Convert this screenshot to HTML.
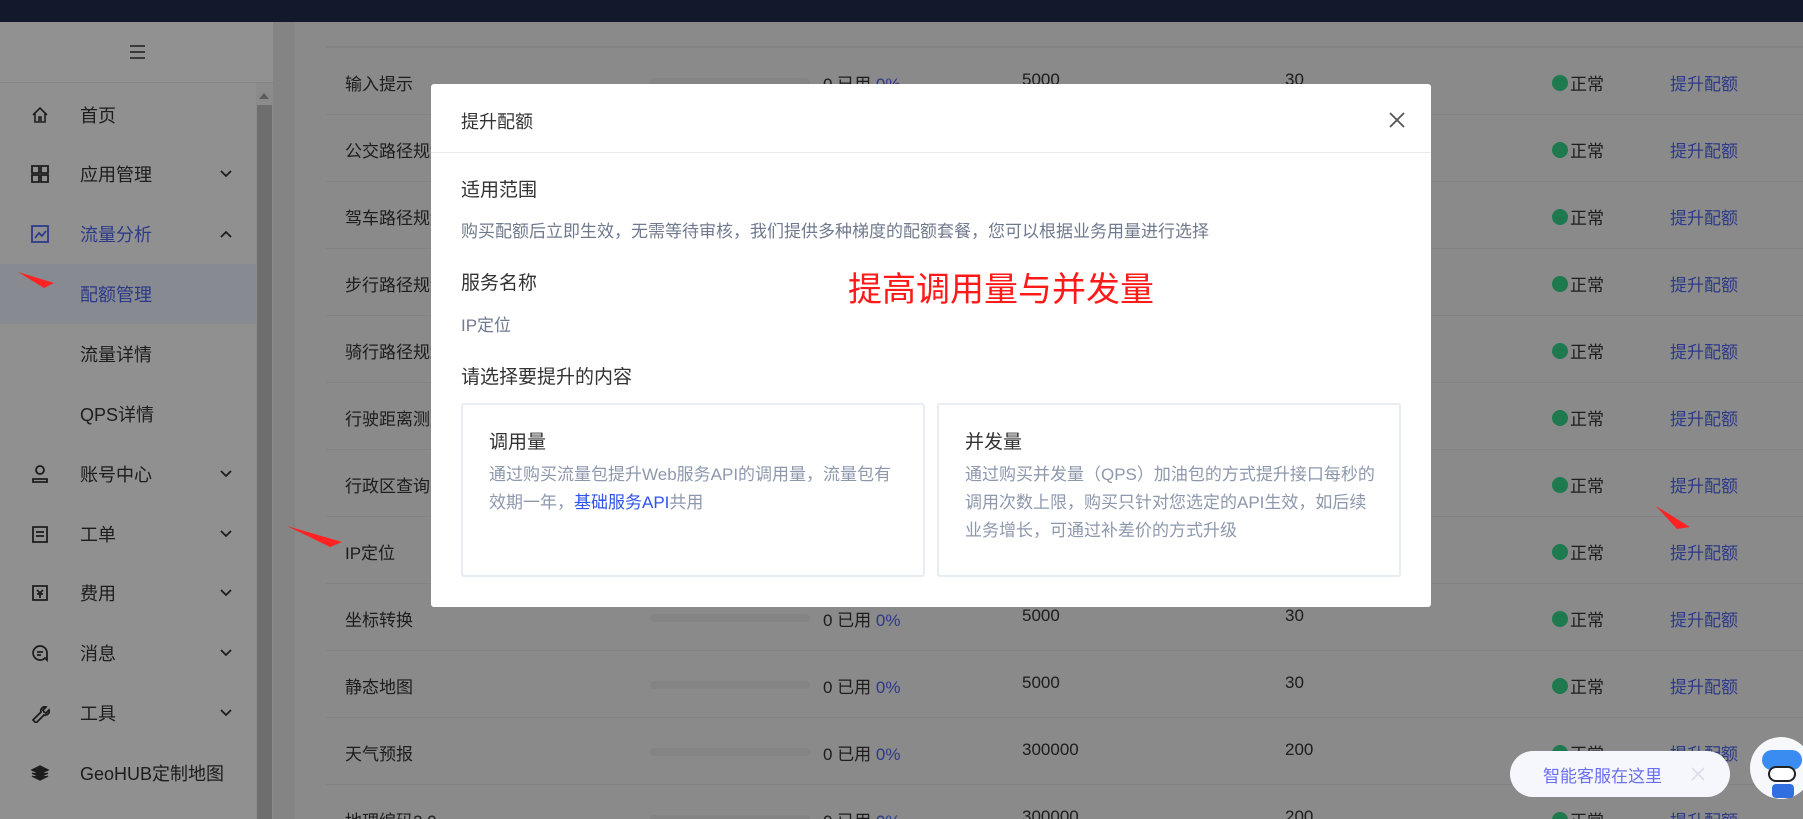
<!DOCTYPE html>
<html style="width:1803px;height:819px;overflow:hidden"><head><meta charset="utf-8"><style>
*{margin:0;padding:0;box-sizing:border-box}
html,body{width:1803px;height:819px;overflow:hidden}
body{font-family:"Liberation Sans","Noto Sans CJK SC",sans-serif;color:#333}
#root{position:relative;width:1803px;height:819px;overflow:hidden;background:#f2f2f2}
.abs{position:absolute}
.hdr{left:0;top:0;width:1803px;height:22px;background:#232d50}
.side{left:0;top:22px;width:256px;height:797px;background:#fdfdfd}
.gap{left:273px;top:22px;width:22px;height:797px;background:#e9e9e9}
.sb{left:256px;top:83px;width:17px;height:736px;background:#f5f5f5}
.thumb{left:257px;top:105px;width:15px;height:714px;background:#c1c1c1}
.mi{position:absolute;left:0;width:256px;height:60px;font-size:18px;display:flex;align-items:center}
.mi .t{position:absolute;left:80px}
.mi .ic{position:absolute;left:30px;width:20px;height:20px}
.mi .ch{position:absolute;left:219px;width:14px;height:10px}
.row{position:absolute;left:326px;width:1477px;height:67px;border-top:1px solid #e4e4e4;font-size:17px}
.row span{position:absolute;top:22px}
.bar{position:absolute;left:324px;top:30px;width:160px;height:8px;border-radius:4px;background:#e8e8e8}
.ok{position:absolute;left:1226px;top:27px;width:16px;height:16px;border-radius:50%;background:#35d58c}
.lk{color:#4e66f0}
.mask{left:0;top:0;width:1803px;height:819px;background:rgba(0,0,0,0.43)}
.modal{left:431px;top:84px;width:1000px;height:523px;background:#fff;border-radius:3px}
.card{position:absolute;top:319px;width:464px;height:174px;border:2px solid #e8ecf3;border-radius:3px}
.card .h{position:absolute;left:26px;top:22px;font-size:19px;color:#333}
.card .d{position:absolute;left:26px;top:56px;font-size:17px;line-height:28px;color:#8e98ad;width:418px}
</style></head><body><div id="root">
<div class="abs hdr"></div>
<div class="abs side"></div>
<div class="abs" style="left:0;top:22px;width:275px;height:61px;background:#fff;border-bottom:1px solid #e8e8e8"></div>
<svg class="abs" style="left:130px;top:45px" width="16" height="14"><path d="M0 1h15M0 7h15M0 13h15" stroke="#333" stroke-width="1.6"/></svg>
<div class="abs sb"></div><div class="abs thumb"></div>
<div class="abs" style="left:259px;top:93px;width:0;height:0;border-left:5px solid transparent;border-right:5px solid transparent;border-bottom:6px solid #a3a3a3"></div>
<div class="abs gap"></div>
<div class="abs" style="left:0;top:264px;width:256px;height:60px;background:#eef2fd"></div>

<div class="mi" style="top:85px"><svg class="ic" viewBox="0 0 20 20"><path d="M3 10L10 3l7 7M5 8v9h4v-5h2v5h4V8" fill="none" stroke="#333" stroke-width="1.6"/></svg><span class="t">首页</span></div>
<div class="mi" style="top:144px"><svg class="ic" viewBox="0 0 20 20"><path d="M2 2h7v7H2zM11 2h7v7h-7zM2 11h7v7H2zM11 11h7v7h-7z" fill="none" stroke="#333" stroke-width="1.8"/></svg><span class="t">应用管理</span><svg class="ch" viewBox="0 0 14 10"><path d="M2 2l5 5 5-5" fill="none" stroke="#333" stroke-width="1.8"/></svg></div>
<div class="mi" style="top:204px;color:#4e66f0"><svg class="ic" viewBox="0 0 20 20"><path d="M2 2h16v16H2zM5 14l4-5 3 3 4-5" fill="none" stroke="#4e66f0" stroke-width="1.8"/></svg><span class="t">流量分析</span><svg class="ch" viewBox="0 0 14 10"><path d="M2 8l5-5 5 5" fill="none" stroke="#333" stroke-width="1.8"/></svg></div>
<div class="mi" style="top:264px;color:#4e66f0"><span class="t">配额管理</span></div>
<div class="mi" style="top:324px"><span class="t">流量详情</span></div>
<div class="mi" style="top:384px"><span class="t">QPS详情</span></div>
<div class="mi" style="top:444px"><svg class="ic" viewBox="0 0 20 20"><circle cx="10" cy="6" r="4" fill="none" stroke="#333" stroke-width="1.8"/><path d="M3 18v-3h14v3z" fill="none" stroke="#333" stroke-width="1.8"/></svg><span class="t">账号中心</span><svg class="ch" viewBox="0 0 14 10"><path d="M2 2l5 5 5-5" fill="none" stroke="#333" stroke-width="1.8"/></svg></div>
<div class="mi" style="top:504px"><svg class="ic" viewBox="0 0 20 20"><path d="M3 3h14v15H3zM6 8h8M6 12h8" fill="none" stroke="#333" stroke-width="1.8"/></svg><span class="t">工单</span><svg class="ch" viewBox="0 0 14 10"><path d="M2 2l5 5 5-5" fill="none" stroke="#333" stroke-width="1.8"/></svg></div>
<div class="mi" style="top:563px"><svg class="ic" viewBox="0 0 20 20"><path d="M3 3h14v14H3zM7 7l3 3 3-3M10 10v5M7 11h6" fill="none" stroke="#333" stroke-width="1.8"/></svg><span class="t">费用</span><svg class="ch" viewBox="0 0 14 10"><path d="M2 2l5 5 5-5" fill="none" stroke="#333" stroke-width="1.8"/></svg></div>
<div class="mi" style="top:623px"><svg class="ic" viewBox="0 0 20 20"><path d="M10 3a7 7 0 1 0 5 12l2 2v-7a7 7 0 0 0-7-7zM7 9h6M7 12h4" fill="none" stroke="#333" stroke-width="1.8"/></svg><span class="t">消息</span><svg class="ch" viewBox="0 0 14 10"><path d="M2 2l5 5 5-5" fill="none" stroke="#333" stroke-width="1.8"/></svg></div>
<div class="mi" style="top:683px"><svg class="ic" viewBox="0 0 20 20"><path d="M3 17l8-8a4 4 0 0 1 5-5l-3 3 1 2 2 1 3-3a4 4 0 0 1-5 5l-8 8z" fill="none" stroke="#333" stroke-width="1.8"/></svg><span class="t">工具</span><svg class="ch" viewBox="0 0 14 10"><path d="M2 2l5 5 5-5" fill="none" stroke="#333" stroke-width="1.8"/></svg></div>
<div class="mi" style="top:743px"><svg class="ic" viewBox="0 0 20 20"><path d="M10 3l8 4-8 4-8-4zM2 10l8 4 8-4M2 13l8 4 8-4" fill="#333" stroke="#333" stroke-width="1.4"/></svg><span class="t">GeoHUB定制地图</span></div>

<div class="abs" style="left:326px;top:46px;width:1477px;border-top:1px solid #e4e4e4"></div>
<div class="row" style="top:47px"><span style="left:19px">输入提示</span><div class="bar"></div><span style="left:497px">0 已用 <b style="font-weight:normal" class="lk">0%</b></span><span style="left:696px">5000</span><span style="left:959px">30</span><div class="ok"></div><span style="left:1244px">正常</span><span style="left:1344px" class="lk">提升配额</span></div>
<div class="row" style="top:114px"><span style="left:19px">公交路径规划</span><div class="ok"></div><span style="left:1244px">正常</span><span style="left:1344px" class="lk">提升配额</span></div>
<div class="row" style="top:181px"><span style="left:19px">驾车路径规划</span><div class="ok"></div><span style="left:1244px">正常</span><span style="left:1344px" class="lk">提升配额</span></div>
<div class="row" style="top:248px"><span style="left:19px">步行路径规划</span><div class="ok"></div><span style="left:1244px">正常</span><span style="left:1344px" class="lk">提升配额</span></div>
<div class="row" style="top:315px"><span style="left:19px">骑行路径规划</span><div class="ok"></div><span style="left:1244px">正常</span><span style="left:1344px" class="lk">提升配额</span></div>
<div class="row" style="top:382px"><span style="left:19px">行驶距离测量</span><div class="ok"></div><span style="left:1244px">正常</span><span style="left:1344px" class="lk">提升配额</span></div>
<div class="row" style="top:449px"><span style="left:19px">行政区查询</span><div class="ok"></div><span style="left:1244px">正常</span><span style="left:1344px" class="lk">提升配额</span></div>
<div class="row" style="top:516px"><span style="left:19px">IP定位</span><div class="ok"></div><span style="left:1244px">正常</span><span style="left:1344px" class="lk">提升配额</span></div>
<div class="row" style="top:583px"><span style="left:19px">坐标转换</span><div class="bar"></div><span style="left:497px">0 已用 <b style="font-weight:normal" class="lk">0%</b></span><span style="left:696px">5000</span><span style="left:959px">30</span><div class="ok"></div><span style="left:1244px">正常</span><span style="left:1344px" class="lk">提升配额</span></div>
<div class="row" style="top:650px"><span style="left:19px">静态地图</span><div class="bar"></div><span style="left:497px">0 已用 <b style="font-weight:normal" class="lk">0%</b></span><span style="left:696px">5000</span><span style="left:959px">30</span><div class="ok"></div><span style="left:1244px">正常</span><span style="left:1344px" class="lk">提升配额</span></div>
<div class="row" style="top:717px"><span style="left:19px">天气预报</span><div class="bar"></div><span style="left:497px">0 已用 <b style="font-weight:normal" class="lk">0%</b></span><span style="left:696px">300000</span><span style="left:959px">200</span><div class="ok"></div><span style="left:1244px">正常</span><span style="left:1344px" class="lk">提升配额</span></div>
<div class="row" style="top:784px"><span style="left:19px">地理编码2.0</span><div class="bar"></div><span style="left:497px">0 已用 <b style="font-weight:normal" class="lk">0%</b></span><span style="left:696px">300000</span><span style="left:959px">200</span><div class="ok"></div><span style="left:1244px">正常</span><span style="left:1344px" class="lk">提升配额</span></div>

<div class="abs mask"></div>

<div class="abs modal">
 <div class="abs" style="left:30px;top:24px;font-size:18px;color:#333">提升配额</div>
 <svg class="abs" style="left:958px;top:28px" width="16" height="16"><path d="M1 1l14 14M15 1L1 15" stroke="#555" stroke-width="1.8"/></svg>
 <div class="abs" style="left:0;top:68px;width:1000px;border-top:1px solid #e8eaee"></div>
 <div class="abs" style="left:30px;top:91px;font-size:19px;color:#333">适用范围</div>
 <div class="abs" style="left:30px;top:133px;font-size:17px;color:#707a8e">购买配额后立即生效，无需等待审核，我们提供多种梯度的配额套餐，您可以根据业务用量进行选择</div>
 <div class="abs" style="left:30px;top:184px;font-size:19px;color:#333">服务名称</div>
 <div class="abs" style="left:417px;top:178px;font-size:34px;color:#ff1a1a">提高调用量与并发量</div>
 <div class="abs" style="left:30px;top:227px;font-size:17px;color:#707a8e">IP定位</div>
 <div class="abs" style="left:30px;top:278px;font-size:19px;color:#333">请选择要提升的内容</div>
 <div class="card" style="left:30px"><div class="h">调用量</div><div class="d">通过购买流量包提升Web服务API的调用量，流量包有效期一年，<span style="color:#2f54eb">基础服务API</span>共用</div></div>
 <div class="card" style="left:506px"><div class="h">并发量</div><div class="d" style="width:412px">通过购买并发量（QPS）加油包的方式提升接口每秒的调用次数上限，购买只针对您选定的API生效，如后续业务增长，可通过补差价的方式升级</div></div>
</div>

<svg class="abs" style="left:0;top:0" width="1803" height="819">
<path d="M18 272L54 283L44 288Z" fill="#f22"/>
<path d="M287 526L342 542L330 547Z" fill="#f22"/>
<path d="M1656 506L1690 527L1677 529Z" fill="#f22"/>
</svg>

<div class="abs" style="left:1510px;top:751px;width:220px;height:46px;border-radius:23px;background:#f6f7fc"></div>
<div class="abs" style="left:1543px;top:762px;font-size:17px;color:#6a6ff0">智能客服在这里</div>
<svg class="abs" style="left:1691px;top:767px" width="14" height="14"><path d="M1 1l12 12M13 1L1 13" stroke="#dcdde8" stroke-width="1.6"/></svg>
<div class="abs" style="left:1750px;top:737px;width:62px;height:62px;border-radius:50%;background:#f6f8fc"></div>
<div class="abs" style="left:1762px;top:750px;width:40px;height:20px;border-radius:10px;background:#3b8cf0"></div>
<div class="abs" style="left:1768px;top:766px;width:28px;height:16px;border-radius:8px;background:#fff;border:2px solid #222"></div>
<div class="abs" style="left:1772px;top:784px;width:22px;height:14px;border-radius:4px;background:#2f6fe0"></div>
</div></body></html>
